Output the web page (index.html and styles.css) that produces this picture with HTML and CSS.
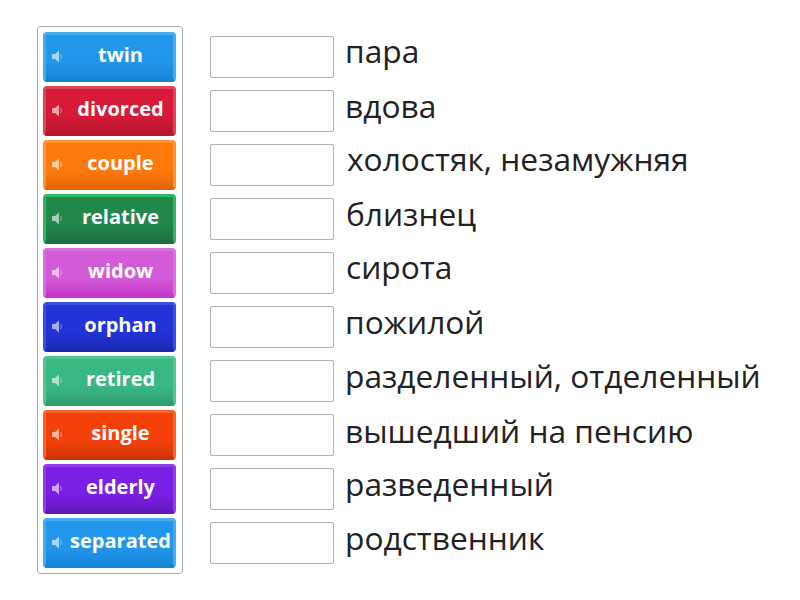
FILE: index.html
```html
<!DOCTYPE html>
<html lang="ru">
<head>
<meta charset="utf-8">
<title>Match up</title>
<link rel="stylesheet" href="styles.css">
</head>
<body>
<main class="game">
  <section class="bank">
    <div class="tile c-blue"><svg class="spk" viewBox="0 0 11 13"><path d="M0 4h3L7 .5v12L3 9H0z"/><path class="w" d="M8.500 4c1 1.500 1 3.500 0 5"/></svg><span class="word">twin</span></div>
    <div class="tile c-red"><svg class="spk" viewBox="0 0 11 13"><path d="M0 4h3L7 .5v12L3 9H0z"/><path class="w" d="M8.500 4c1 1.500 1 3.500 0 5"/></svg><span class="word">divorced</span></div>
    <div class="tile c-orange"><svg class="spk" viewBox="0 0 11 13"><path d="M0 4h3L7 .5v12L3 9H0z"/><path class="w" d="M8.500 4c1 1.500 1 3.500 0 5"/></svg><span class="word">couple</span></div>
    <div class="tile c-green"><svg class="spk" viewBox="0 0 11 13"><path d="M0 4h3L7 .5v12L3 9H0z"/><path class="w" d="M8.500 4c1 1.500 1 3.500 0 5"/></svg><span class="word">relative</span></div>
    <div class="tile c-pink"><svg class="spk" viewBox="0 0 11 13"><path d="M0 4h3L7 .5v12L3 9H0z"/><path class="w" d="M8.500 4c1 1.500 1 3.500 0 5"/></svg><span class="word">widow</span></div>
    <div class="tile c-indigo"><svg class="spk" viewBox="0 0 11 13"><path d="M0 4h3L7 .5v12L3 9H0z"/><path class="w" d="M8.500 4c1 1.500 1 3.500 0 5"/></svg><span class="word">orphan</span></div>
    <div class="tile c-mint"><svg class="spk" viewBox="0 0 11 13"><path d="M0 4h3L7 .5v12L3 9H0z"/><path class="w" d="M8.500 4c1 1.500 1 3.500 0 5"/></svg><span class="word">retired</span></div>
    <div class="tile c-vermilion"><svg class="spk" viewBox="0 0 11 13"><path d="M0 4h3L7 .5v12L3 9H0z"/><path class="w" d="M8.500 4c1 1.500 1 3.500 0 5"/></svg><span class="word">single</span></div>
    <div class="tile c-purple"><svg class="spk" viewBox="0 0 11 13"><path d="M0 4h3L7 .5v12L3 9H0z"/><path class="w" d="M8.500 4c1 1.500 1 3.500 0 5"/></svg><span class="word">elderly</span></div>
    <div class="tile c-blue"><svg class="spk" viewBox="0 0 11 13"><path d="M0 4h3L7 .5v12L3 9H0z"/><path class="w" d="M8.500 4c1 1.500 1 3.500 0 5"/></svg><span class="word">separated</span></div>
  </section>
  <section class="answers">
    <div class="row"><div class="slot"></div><span class="label up2">пара</span></div>
    <div class="row"><div class="slot"></div><span class="label up1">вдова</span></div>
    <div class="row"><div class="slot"></div><span class="label up2 in2">холостяк, незамужняя</span></div>
    <div class="row"><div class="slot"></div><span class="label up1 in1">близнец</span></div>
    <div class="row"><div class="slot"></div><span class="label up2 in1">сирота</span></div>
    <div class="row"><div class="slot"></div><span class="label up1">пожилой</span></div>
    <div class="row"><div class="slot"></div><span class="label up1">разделенный, отделенный</span></div>
    <div class="row"><div class="slot"></div><span class="label">вышедший на пенсию</span></div>
    <div class="row"><div class="slot"></div><span class="label up1">разведенный</span></div>
    <div class="row"><div class="slot"></div><span class="label up1">родственник</span></div>
  </section>
</main>
</body>
</html>
```
FILE: styles.css
```css
* { box-sizing: border-box; }
html, body { margin: 0; height: 100%; background: #fff; }
body { font-family: "Open Sans", "Noto Sans", sans-serif; overflow: hidden; }

.game {
  display: flex;
  align-items: flex-start;
  padding: 26px 0 0 37px;
}

.bank {
  width: 146px;
  height: 548px;
  padding: 5px;
  display: flex;
  flex-direction: column;
  gap: 4px;
  border: 1px solid #aaa;
  border-radius: 4px;
  background: #fff;
}

.tile {
  flex: none;
  height: 50px;
  width: 133px;
  display: flex;
  align-items: center;
  position: relative;
  padding: 0 0 3px 0;
  border-radius: 4px;
  border-style: solid;
  border-width: 3px 3px 4px;
  border-color: var(--edge) var(--edge) var(--low);
  background-origin: border-box;
  color: #fff;
  background-color: var(--c);
  background-image: linear-gradient(to bottom, var(--c) 60%, var(--low) 100%);
}

.c-blue { --c: #2196ea; --edge: #45acf2; --low: #1583d6; }
.c-red { --c: #d61a38; --edge: #e04459; --low: #b5152e; }
.c-orange { --c: #ff7a0d; --edge: #ff9233; --low: #df6506; }
.c-green { --c: #21874b; --edge: #2db866; --low: #1b703f; }
.c-pink { --c: #d25bd8; --edge: #da70df; --low: #c535c6; }
.c-indigo { --c: #2233d8; --edge: #3a4fdf; --low: #1b29b2; }
.c-mint { --c: #3ab884; --edge: #52c593; --low: #309c6f; }
.c-vermilion { --c: #f4410a; --edge: #fd6229; --low: #cc3407; }
.c-purple { --c: #7a1fe6; --edge: #8f3eec; --low: #6217ba; }

.spk {
  position: absolute;
  left: 6px;
  top: 15px;
  width: 11px;
  height: 13px;
  fill: rgba(255,255,255,.6);
}
.spk .w { fill: none; stroke: rgba(255,255,255,.45); stroke-width: 1; }

.word {
  width: 100%;
  padding-left: 22px;
  text-align: center;
  font-size: 20px;
  font-weight: 700;
  line-height: 28px;
  white-space: nowrap;
}

.answers {
  margin: 10px 0 0 27px;
  display: flex;
  flex-direction: column;
  gap: 12px;
}

.row {
  display: flex;
  align-items: flex-start;
  height: 42px;
  gap: 11px;
}

.slot {
  flex: none;
  width: 124px;
  height: 42px;
  border: 1px solid #b4b4b4;
  border-radius: 2px;
  background: #fff;
}

.label {
  font-size: 31.7px;
  line-height: 34px;
  color: #222;
  white-space: nowrap;
}

.up1 { margin-top: -1px; }
.up2 { margin-top: -2px; }
.in1 { margin-left: 1px; }
.in2 { margin-left: 2px; }
```
